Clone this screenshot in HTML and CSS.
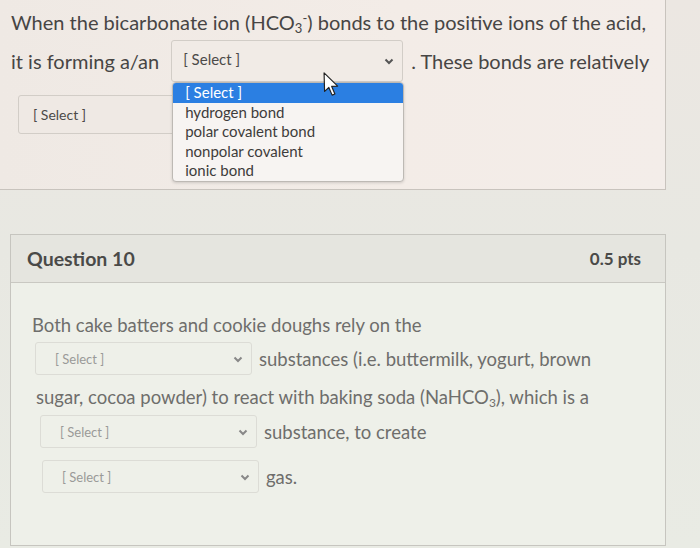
FILE: index.html
```html
<!DOCTYPE html>
<html>
<head>
<meta charset="utf-8">
<link rel="stylesheet" href="styles.css">
</head>
<body>
<div class="page">
  <div class="card prev">
    <div class="line1">When the bicarbonate ion (HCO<sub>3</sub><sup>-</sup>) bonds to the positive ions of the acid,</div>
    <div class="line2">
      <span>it is forming a/an</span>
      <div class="select sel-a">
        <span class="sel-text">[ Select ]</span>
        <svg class="chev" width="10" height="7" viewBox="0 0 10 7"><path d="M1.5 1.5 L5 5 L8.5 1.5" fill="none" stroke="#555" stroke-width="2"/></svg>
        <ul class="dropdown">
          <li class="hl">[ Select ]</li>
          <li>hydrogen bond</li>
          <li>polar covalent bond</li>
          <li>nonpolar covalent</li>
          <li>ionic bond</li>
        </ul>
      </div>
      <span class="after">. These bonds are relatively</span>
    </div>
    <div class="line3">
      <div class="select sel-b"><span class="sel-text">[ Select ]</span></div>
    </div>
    <svg class="cursor" width="17" height="27" viewBox="0 0 16 24"><path d="M1 1 L1.5 18.5 L5.5 14.8 L8.6 22 L11.2 21 L8.2 13.8 L13.8 13.5 Z" fill="#fff" stroke="#222" stroke-width="1.1" stroke-linejoin="round"/></svg>
  </div>

  <div class="card q10">
    <div class="q-head">
      <span class="q-title">Question 10</span>
      <span class="q-pts">0.5 pts</span>
    </div>
    <div class="q-body">
      <div class="t-line first">Both cake batters and cookie doughs rely on the</div>
      <div class="s-row r1">
        <div class="select small"><span class="sel-text">[ Select ]</span><svg class="chev" width="10" height="7" viewBox="0 0 10 7"><path d="M1.5 1.5 L5 5 L8.5 1.5" fill="none" stroke="#888" stroke-width="2"/></svg></div>
        <span>substances (i.e. buttermilk, yogurt, brown</span>
      </div>
      <div class="t-line second">sugar, cocoa powder) to react with baking soda (NaHCO<sub class="sb">3</sub>), which is a</div>
      <div class="s-row r2">
        <div class="select small"><span class="sel-text">[ Select ]</span><svg class="chev" width="10" height="7" viewBox="0 0 10 7"><path d="M1.5 1.5 L5 5 L8.5 1.5" fill="none" stroke="#888" stroke-width="2"/></svg></div>
        <span>substance, to create</span>
      </div>
      <div class="s-row r3">
        <div class="select small"><span class="sel-text">[ Select ]</span><svg class="chev" width="10" height="7" viewBox="0 0 10 7"><path d="M1.5 1.5 L5 5 L8.5 1.5" fill="none" stroke="#888" stroke-width="2"/></svg></div>
        <span>gas.</span>
      </div>
    </div>
  </div>
</div>
</body>
</html>
```
FILE: styles.css
```css
html, body {
  margin: 0;
  padding: 0;
}
body {
  width: 700px;
  height: 548px;
  overflow: hidden;
  background: linear-gradient(180deg, #ece7e2 0%, #e8e8e2 45%, #e9ebe4 100%);
  font-family: Lato, "Open Sans", sans-serif;
}
.page {
  position: relative;
  height: 548px;
}
.card {
  position: relative;
  box-sizing: border-box;
}
.prev {
  width: 668px;
  height: 190px;
  margin-left: -2px;
  padding: 8px 0 0 12px;
  background: linear-gradient(90deg, #efe9e4 0%, #f3ece7 60%, #f3ede9 100%);
  border: 1px solid #c8c3bd;
  border-top: none;
  color: #474544;
  font-size: 20px;
}
.line1 {
  line-height: 28px;
  white-space: nowrap;
}
sub, sup {
  font-size: 13px;
  line-height: 0;
}
sub { vertical-align: -3px; }
sup { vertical-align: 7px; }
.line2 {
  margin-top: 4px;
  display: flex;
  align-items: center;
  height: 42px;
}
.select {
  position: relative;
  box-sizing: border-box;
  display: flex;
  align-items: center;
  border: 1px solid #d2cdc7;
  border-radius: 3px;
  background: #f1ebe6;
}
.sel-text {
  font-size: 14px;
  color: #4c4a48;
}
.chev {
  position: absolute;
  right: 8px;
  top: 50%;
  margin-top: -3px;
}
.sel-a {
  margin-left: 12px;
  width: 232px;
  height: 42px;
  padding-left: 11px;
  padding-bottom: 4px;
}
.sel-a .sel-text {
  font-size: 15px;
}
.after {
  margin-left: 8px;
}
.dropdown {
  position: absolute;
  top: 41px;
  left: 0;
  width: 230px;
  margin: 0;
  padding: 0;
  list-style: none;
  background: #f7f4f2;
  border: 1px solid #bdb9b4;
  border-radius: 4px;
  box-shadow: 0 1px 3px rgba(0,0,0,0.15);
  z-index: 5;
}
.dropdown li {
  font-size: 15px;
  line-height: 19.5px;
  padding-left: 12px;
  color: #3e3c3b;
}
.dropdown li.hl {
  background: #2b7fe2;
  color: #ffffff;
  border-radius: 3px 3px 0 0;
}
.line3 {
  margin-top: 13px;
  display: flex;
}
.sel-b {
  margin-left: 7px;
  width: 232px;
  height: 39px;
  padding-left: 14px;
  background: #efe9e4;
}
.cursor {
  position: absolute;
  left: 324px;
  top: 71px;
  z-index: 6;
}

.q10 {
  margin: 44px 0 0 10px;
  width: 656px;
  height: 312px;
  border: 1px solid #c6c5bf;
  background: #eef0e9;
}
.q-head {
  height: 48px;
  box-sizing: border-box;
  display: flex;
  align-items: center;
  justify-content: space-between;
  padding: 0 24px 0 16px;
  background: #e5e5df;
  border-bottom: 1px solid #c9c8c2;
  font-weight: bold;
  font-size: 19.5px;
  color: #4a4a48;
}
.q-pts {
  font-size: 17px;
}
.q-body {
  padding: 29px 0 0 21px;
  font-size: 18.5px;
  color: #6e6e6c;
}
.t-line {
  line-height: 26px;
  white-space: nowrap;
}
.sb {
  font-size: 12px;
  vertical-align: -3px;
}
.s-row {
  display: flex;
  align-items: center;
  white-space: nowrap;
}
.s-row span {
  margin-left: 7px;
}
.select.small {
  width: 217px;
  height: 33px;
  padding-left: 12px;
  border-color: #dcdcd6;
  background: #eef0e9;
}
.select.small .sel-text {
  font-size: 13px;
  color: #9a9a98;
}
.r1 { margin-top: 4px; margin-left: 3px; }
.second { margin-top: 9px; margin-left: 4px; }
.r2 { margin-top: 5px; margin-left: 8px; }
.r3 { margin-top: 12px; margin-left: 10px; }
```
